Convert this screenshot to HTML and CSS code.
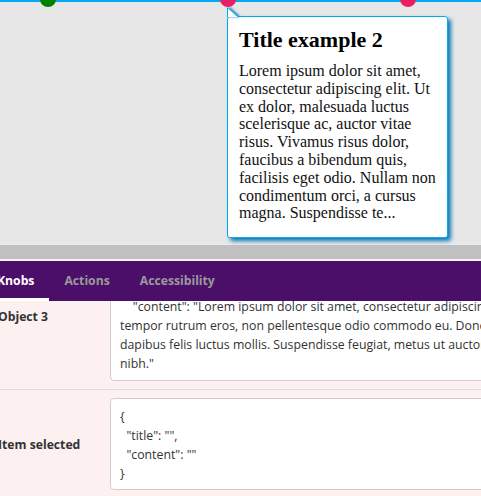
FILE: index.html
```html
<!DOCTYPE html>
<html lang="en">
<head>
  <meta charset="UTF-8" />
  <meta name="viewport" content="width=device-width, initial-scale=1.0"/>
  <title>Timeline tooltip</title>
  <link rel="stylesheet" href="styles.css">
</head>
<body>
  <div class="stage">
    <span class="dot dot-green" style="left: 40px"></span>
    <span class="dot dot-pink" style="left: 220px"></span>
    <span class="dot dot-pink" style="left: 400px"></span>

    <div class="card">
      <svg class="pointer" width="11" height="10" viewBox="0 0 11 10">
        <polygon points="0.5,0 0.5,10 11,10" fill="#fff"/>
        <polyline points="0.5,10 0.5,0.5 10.5,9.5" fill="none" stroke="#03a9f4" stroke-width="1"/>
      </svg>
      <h2>Title example 2</h2>
      <p>Lorem ipsum dolor sit amet, consectetur adipiscing elit. Ut ex dolor, malesuada luctus scelerisque ac, auctor vitae risus. Vivamus risus dolor, faucibus a bibendum quis, facilisis eget odio. Nullam non condimentum orci, a cursus magna. Suspendisse te...</p>
    </div>
  </div>

  <div class="splitter"></div>

  <div class="addons">
    <div class="tabs">
      <div class="tab active">Knobs</div>
      <div class="tab">Actions</div>
      <div class="tab">Accessibility</div>
    </div>

    <div class="panel">
      <div class="row first">
        <label class="label">Object 3</label>
        <div class="field field-tall">
<div class="code">{
  "title": "Title example 3",
    "content": "Lorem ipsum dolor sit amet, consectetur adipiscing elit. Nunc
tempor rutrum eros, non pellentesque odio commodo eu. Donec
dapibus felis luctus mollis. Suspendisse feugiat, metus ut auctor
nibh."
}</div>
        </div>
      </div>
      <div class="row">
        <label class="label">Item selected</label>
        <div class="field">
<div class="code">{
  "title": "",
  "content": ""
}</div>
        </div>
      </div>
    </div>
  </div>
</body>
</html>
```

FILE: styles.css
```css
* { box-sizing: border-box; }
html, body {
  margin: 0;
  width: 481px;
  height: 496px;
  overflow: hidden;
}
body {
  background-color: #fdf0f0;
  font-family: "Open Sans", sans-serif;
}

/* timeline area */
.stage {
  position: relative;
  height: 244px;
  background-color: #e7e7e7;
  border-top: 2px solid #03a9f4;
}
.dot {
  position: absolute;
  top: -11px;
  width: 16px;
  height: 16px;
  border-radius: 50%;
}
.dot-green { background-color: #008000; }
.dot-pink { background-color: #e91e63; }

.card {
  position: absolute;
  left: 227px;
  top: 14px;
  width: 221px;
  padding: 10px 6px 15px 11px;
  background-color: #fff;
  border: 1px solid #03a9f4;
  border-radius: 3px;
  box-shadow: 3px 3px 4px #0a78b6;
  font-family: "Liberation Serif", serif;
  color: #111;
}
.pointer {
  position: absolute;
  left: -1px;
  top: -10px;
  filter: drop-shadow(2px 0 1px #1083c4);
}
.card h2 {
  margin: 0 0 9px;
  font-size: 22px;
  font-weight: bold;
  color: #000;
}
.card p {
  margin: 0;
  font-size: 16px;
  line-height: 17.8px;
}

.splitter {
  height: 17px;
  background-color: #c0c0c0;
  border-top: 1px solid #ececec;
  border-bottom: 2px solid #f3f3f3;
}

/* addons panel */
.addons { margin-left: -18px; }
.tabs {
  display: flex;
  height: 40px;
  background-color: #4b0f69;
}
.tab {
  padding: 0 15px;
  line-height: 40px;
  font-size: 12.2px;
  font-weight: bold;
  color: #9a9a9a;
}
.tab.active {
  color: #fff;
  box-shadow: inset 0 -3px #fff;
}

.panel {
  height: 195px;
  overflow: hidden;
}
.row {
  display: grid;
  grid-template-columns: 128px 1fr;
  align-items: center;
  padding: 8px 0;
  border-bottom: 1px solid #dcdcdc;
}
.row.first { margin-top: -58px; }
.label {
  padding-left: 16px;
  font-size: 12.2px;
  font-weight: bold;
  color: #333;
}
.field {
  width: 560px;
  padding: 8px 9px 6px;
  background-color: #fff;
  border: 1px solid #cfcfcf;
  border-radius: 4px;
  line-height: 19px;
}
.field-tall {
  height: 130px;
  padding-top: 9px;
}
.field-tall .code {
  height: 111px;
  overflow: hidden;
  line-height: 18.7px;
}
.code {
  white-space: pre;
  font-size: 12.3px;
  color: #333;
}
```
